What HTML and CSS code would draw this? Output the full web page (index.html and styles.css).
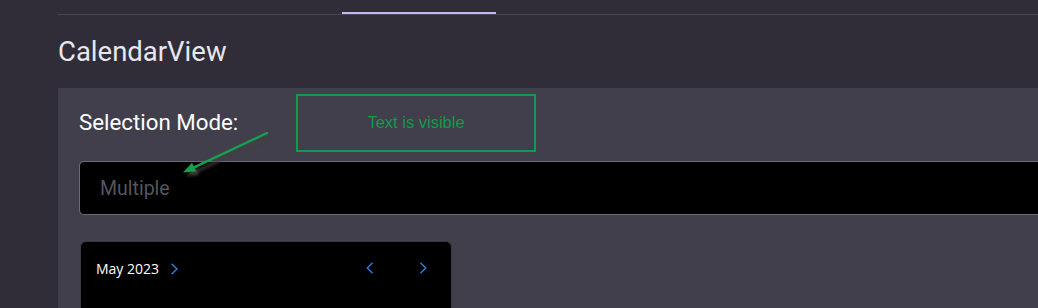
FILE: index.html
```html
<!DOCTYPE html>
<html lang="en">
<head>
<meta charset="utf-8">
<title>CalendarView</title>
<link rel="stylesheet" href="styles.css">
</head>
<body>
<div class="page">
  <div class="tabs">
    <div class="tab tab-active"></div>
  </div>
  <h1 class="title">CalendarView</h1>
  <section class="panel">
    <div class="label">Selection Mode:</div>
    <div class="select"><span class="placeholder">Multiple</span></div>
    <div class="calendar">
      <div class="cal-header">
        <span class="cal-month">May 2023</span>
        <svg class="chev chev-head" width="9" height="12" viewBox="0 0 9 12"><polyline points="1.5,0.8 7,6 1.5,11.2"/></svg>
        <div class="cal-nav">
          <span class="nav-btn"><svg class="chev" width="8" height="12" viewBox="0 0 8 12"><polyline points="6.5,0.8 1.3,6 6.5,11.2"/></svg></span>
          <span class="nav-btn"><svg class="chev" width="8" height="12" viewBox="0 0 8 12"><polyline points="1.5,0.8 6.7,6 1.5,11.2"/></svg></span>
        </div>
      </div>
    </div>
  </section>
</div>
<div class="note">Text is visible</div>
<svg class="arrow" width="1038" height="308" viewBox="0 0 1038 308">
  <defs>
    <filter id="sh" x="-20%" y="-20%" width="140%" height="160%">
      <feDropShadow dx="3" dy="3.5" stdDeviation="1.8" flood-color="#404040" flood-opacity="1"/>
    </filter>
  </defs>
  <g filter="url(#sh)">
    <line x1="267" y1="133" x2="192" y2="168.3" stroke="#14a04f" stroke-width="2.4" stroke-linecap="round"/>
    <polygon points="183,172.6 196,171.2 192,162.8" fill="#14a04f"/>
  </g>
</svg>
</body>
</html>
```
FILE: styles.css
```css
html, body {
  margin: 0;
  padding: 0;
  background: #302d38;
  height: 100%;
  overflow: hidden;
}

body {
  position: relative;
  font-family: Roboto, "Noto Sans", sans-serif;
}

.page {
  padding-left: 58px;
}

.tabs {
  display: flex;
  height: 14px;
  border-bottom: 1px solid #4a4753;
}

.tab {
  box-sizing: border-box;
  width: 154px;
  height: 14px;
}

.tab-active {
  margin-left: 284px;
  border-bottom: 2px solid #c5b8f3;
}

.title {
  box-sizing: border-box;
  height: 73px;
  margin: 0;
  padding-top: 22px;
  font-size: 27.5px;
  line-height: 30px;
  font-weight: 400;
  color: #e8e6ee;
}

.panel {
  background: #403f4b;
  padding: 22px 0 40px 21px;
  height: 400px;
}

.label {
  font-size: 22.3px;
  line-height: 24px;
  color: #ffffff;
}

.select {
  box-sizing: border-box;
  margin-top: 27px;
  height: 54px;
  background: #000;
  border: 1px solid #6d6c76;
  border-right: none;
  border-radius: 5px 0 0 5px;
  display: flex;
  align-items: center;
  padding-left: 20px;
}

.placeholder {
  font-size: 19.5px;
  color: #55555d;
  padding-top: 1px;
}

.calendar {
  box-sizing: border-box;
  margin-top: 26px;
  margin-left: 1px;
  width: 372px;
  height: 200px;
  background: #000;
  border: 1px solid #3a3a44;
  border-bottom: none;
  border-radius: 6px 6px 0 0;
}

.cal-header {
  display: flex;
  align-items: center;
  height: 52px;
  padding-left: 15px;
}

.cal-month {
  font-family: "Open Sans", "Noto Sans", sans-serif;
  font-size: 14px;
  color: #ffffff;
}

.chev {
  display: block;
  fill: none;
  stroke: #2b7fe0;
  stroke-width: 1.4;
}

.chev-head {
  margin-left: 11px;
  margin-top: 1px;
}

.cal-nav {
  margin-left: auto;
  margin-right: 2px;
  display: flex;
}

.nav-btn {
  width: 53px;
  height: 32px;
  display: flex;
  align-items: center;
  justify-content: center;
}

.note {
  position: absolute;
  left: 296px;
  top: 94px;
  box-sizing: border-box;
  width: 240px;
  height: 58px;
  border: 2px solid #0f9b4c;
  display: flex;
  align-items: center;
  justify-content: center;
  font-family: "Liberation Sans", Arial, sans-serif;
  font-size: 16.5px;
  color: #14994b;
  padding-bottom: 1px;
}

.arrow {
  position: absolute;
  left: 0;
  top: 0;
  pointer-events: none;
}
```
